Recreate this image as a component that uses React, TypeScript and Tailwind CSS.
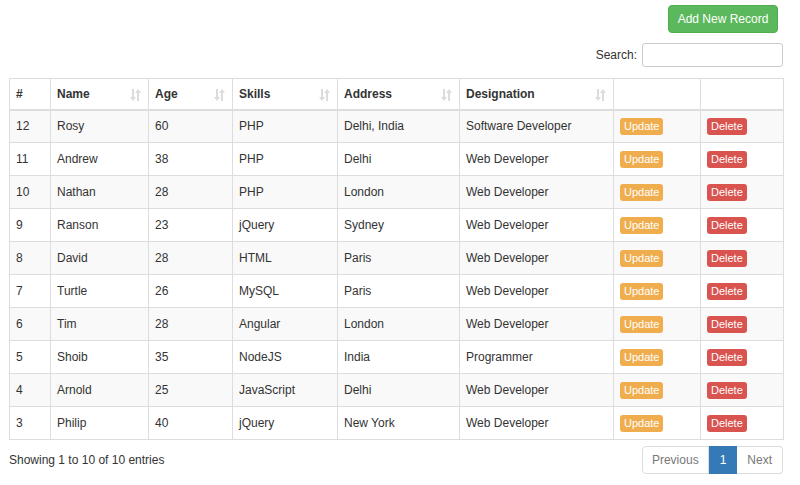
const rows = [
  [12, "Rosy", 60, "PHP", "Delhi, India", "Software Developer"],
  [11, "Andrew", 38, "PHP", "Delhi", "Web Developer"],
  [10, "Nathan", 28, "PHP", "London", "Web Developer"],
  [9, "Ranson", 23, "jQuery", "Sydney", "Web Developer"],
  [8, "David", 28, "HTML", "Paris", "Web Developer"],
  [7, "Turtle", 26, "MySQL", "Paris", "Web Developer"],
  [6, "Tim", 28, "Angular", "London", "Web Developer"],
  [5, "Shoib", 35, "NodeJS", "India", "Programmer"],
  [4, "Arnold", 25, "JavaScript", "Delhi", "Web Developer"],
  [3, "Philip", 40, "jQuery", "New York", "Web Developer"],
];

const SortIcon = () => (
  <svg width="11" height="12" viewBox="0 0 11 12" className="absolute right-[7px] top-[10px]">
    <g fill="#dcdcdc">
      <rect x="2" y="0" width="2" height="9" />
      <path d="M0 8h6l-3 4z" />
      <rect x="7" y="3" width="2" height="9" />
      <path d="M5 4h6l-3-4z" />
    </g>
  </svg>
);

const headers = [
  { label: "#", w: "w-[41px]", sort: false },
  { label: "Name", w: "w-[98px]", sort: true },
  { label: "Age", w: "w-[84px]", sort: true },
  { label: "Skills", w: "w-[105px]", sort: true },
  { label: "Address", w: "w-[122px]", sort: true },
  { label: "Designation", w: "w-[154px]", sort: true },
  { label: "", w: "w-[87px]", sort: false },
  { label: "", w: "w-[83px]", sort: false },
];

export default function App() {
  return (
    <div
      className="w-[800px] h-[485px] bg-white text-[#333] text-[12px] pl-[9px] pr-[17px] pt-[5px]"
      style={{ fontFamily: '"Liberation Sans", Arial, sans-serif' }}
    >
      <div className="flex justify-end pr-[5px]">
        <button className="h-[28px] w-[110px] rounded-[4px] bg-[#5cb85c] border border-[#4cae4c] text-white text-[12px]">
          Add New Record
        </button>
      </div>
      <div className="flex justify-end items-center mt-[10px] gap-[5px]">
        <span>Search:</span>
        <input className="w-[141px] h-[24px] border border-[#ccc] rounded-[3px] outline-none" />
      </div>
      <table className="mt-[11px] w-[774px] table-fixed border-collapse border border-[#ddd]">
        <thead>
          <tr className="h-[31px]">
            {headers.map((h, i) => (
              <th
                key={i}
                className={`${h.w} relative text-left font-bold px-[6px] border border-[#ddd] border-b-2`}
              >
                {h.label}
                {h.sort && <SortIcon />}
              </th>
            ))}
          </tr>
        </thead>
        <tbody>
          {rows.map((r, i) => (
            <tr key={i} className={`h-[33px] ${i % 2 === 0 ? "bg-[#f9f9f9]" : "bg-white"}`}>
              {r.map((c, j) => (
                <td key={j} className="px-[6px] border border-[#ddd]">
                  {c}
                </td>
              ))}
              <td className="px-[6px] border border-[#ddd]">
                <span className="inline-flex items-center h-[17px] px-[4px] rounded-[3px] bg-[#f0ad4e] text-white text-[11px]">
                  Update
                </span>
              </td>
              <td className="px-[6px] border border-[#ddd]">
                <span className="inline-flex items-center h-[17px] px-[4px] rounded-[3px] bg-[#d9534f] text-white text-[11px]">
                  Delete
                </span>
              </td>
            </tr>
          ))}
        </tbody>
      </table>
      <div className="flex justify-between items-center mt-[6px]">
        <span>Showing 1 to 10 of 10 entries</span>
        <div className="flex h-[28px] text-[12px]">
          <span className="flex items-center px-[9px] border border-[#ddd] rounded-l-[4px] text-[#777]">Previous</span>
          <span className="flex items-center px-[10px] border border-[#337ab7] bg-[#337ab7] text-white">1</span>
          <span className="flex items-center px-[10px] border border-[#ddd] border-l-0 rounded-r-[4px] text-[#777]">Next</span>
        </div>
      </div>
    </div>
  );
}
